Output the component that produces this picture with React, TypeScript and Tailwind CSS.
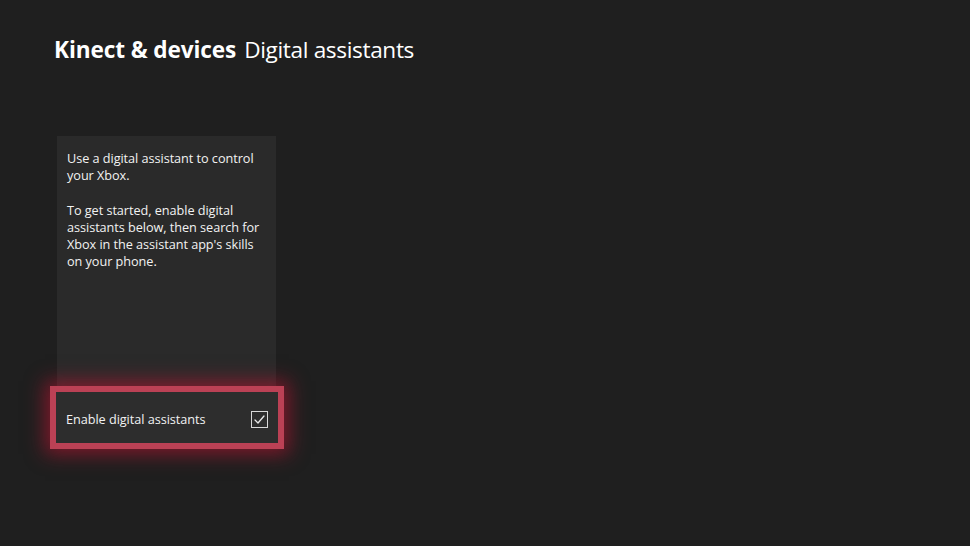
import React from "react";

const font = { fontFamily: '"Open Sans", "Noto Sans", "Liberation Sans", sans-serif' };

export default function App() {
  return (
    <div
      className="w-[970px] h-[546px] bg-[#1f1f1f] text-white overflow-hidden flex flex-col"
      style={font}
    >
      <header className="pl-[54px] pt-[35px] flex items-baseline gap-[8px] leading-[30px]">
        <span className="text-[22.6px] font-bold tracking-[-0.1px]">Kinect &amp; devices</span>
        <span className="text-[22.6px] font-normal tracking-[-0.35px]">Digital assistants</span>
      </header>

      <section className="mt-[71px] ml-[57px] w-[219px] h-[307px] bg-[#2a2a2a] flex flex-col">
        <div className="px-[10px] pt-[14px] text-[12.7px] leading-[17px] text-[#f2f2f2] tracking-[-0.05px]">
          <p>Use a digital assistant to control your Xbox.</p>
          <p className="mt-[18px]">
            To get started, enable digital assistants below, then search for Xbox in the
            assistant app's skills on your phone.
          </p>
        </div>

        <div className="mt-auto -ml-[7px] w-[234px] h-[63px] border-[6px] border-[#bb4155] bg-[#2d2d2d] shadow-[0_0_18px_5px_rgba(190,20,50,0.6)] flex items-center justify-between pl-[10px] pr-[10px] pt-[4px] -mb-[6px]">
          <span className="text-[12.7px] text-[#f2f2f2] tracking-[-0.05px]">Enable digital assistants</span>
          <span className="w-[17px] h-[17px] border-[1.5px] border-[#d8d8d8] flex items-center justify-center">
            <svg width="13" height="13" viewBox="0 0 13 13" fill="none">
              <polyline
                points="2,7 5,10 11,3"
                stroke="#e8e8e8"
                strokeWidth="1.3"
                strokeLinecap="round"
                strokeLinejoin="round"
              />
            </svg>
          </span>
        </div>
      </section>
    </div>
  );
}
